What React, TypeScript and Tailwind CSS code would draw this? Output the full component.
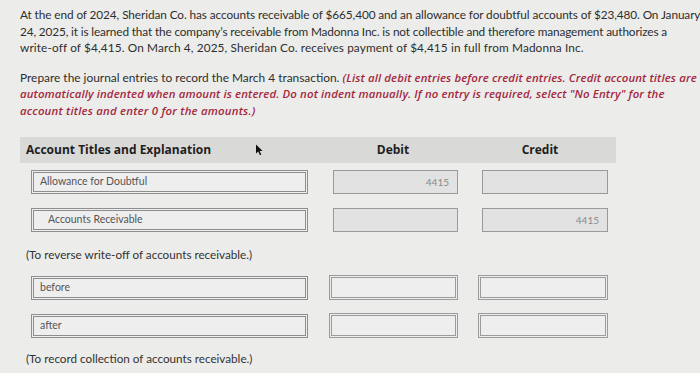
import React from "react";

interface RowProps {
    title: string;
    indent?: boolean;
    debit?: string;
    credit?: string;
    locked?: boolean;
}

const EntryRow: React.FC<RowProps> = ({ title, indent, debit, credit, locked }) => {
    const amountBox = locked
        ? "h-[24px] border border-[#9a9a9a] bg-[#e2e2e2] flex items-center justify-end pr-2 text-[10px] text-[#8a8a8a]"
        : "h-[25px] border-[3px] border-double border-[#9b9b9b] bg-[#eeeeee]";
    return (
        <div className="flex items-center h-[23px] ml-[20px]">
            <div className="ml-[11px] w-[277px] h-[24px] border-[3px] border-double border-[#8e8e8e] bg-[#eeeeee] flex items-center text-[10.5px] text-[#555]">
                <span className={indent ? "pl-[14px]" : "pl-[6px]"}>{title}</span>
            </div>
            <div className={`${amountBox} ${locked ? "ml-[25px] w-[125px]" : "ml-[21px] w-[129px]"}`}>
                {debit}
            </div>
            <div className={`${amountBox} ${locked ? "ml-[24px] w-[126px]" : "ml-[20px] w-[130px]"}`}>
                {credit}
            </div>
        </div>
    );
};

export default function App() {
    return (
        <div className="w-[700px] h-[373px] overflow-hidden bg-[#ececea] font-['Lato','Liberation_Sans',sans-serif] text-[#2e2e2e]">
            <div className="pl-[20px] pt-[7px] leading-[16.6px] whitespace-nowrap">
                <p className="text-[11.8px]">
                    <span className="tracking-[-0.09px]">
                        At the end of 2024, Sheridan Co. has accounts receivable of $665,400 and an allowance for doubtful accounts of $23,480. On January
                    </span>
                    <br />
                    <span className="tracking-[-0.14px]">
                        24, 2025, it is learned that the company’s receivable from Madonna Inc. is not collectible and therefore management authorizes a
                    </span>
                    <br />
                    <span className="tracking-[0.13px]">
                        write-off of $4,415. On March 4, 2025, Sheridan Co. receives payment of $4,415 in full from Madonna Inc.
                    </span>
                </p>
                <p className="mt-[13px] text-[11.9px]">
                    Prepare the journal entries to record the March 4 transaction.{" "}
                    <span className="italic font-semibold text-[#a3283f] font-['Open_Sans','Liberation_Sans',sans-serif] text-[11.4px]">
                        <span className="tracking-[0.12px]">(List all debit entries before credit entries. Credit account titles are</span>
                        <br />
                        <span className="tracking-[0.13px]">
                            automatically indented when amount is entered. Do not indent manually. If no entry is required, select "No Entry" for the
                        </span>
                        <br />
                        <span className="tracking-[0.2px]">account titles and enter 0 for the amounts.)</span>
                    </span>
                </p>
            </div>

            <div className="ml-[20px] mt-[17px] w-[596px] h-[26px] bg-[#d9d9d8] flex items-center text-[12px] font-bold text-[#1e1e1e] font-['Open_Sans','Liberation_Sans',sans-serif]">
                <div className="w-[300px] pl-[6px] flex items-center">
                    <span>Account Titles and Explanation</span>
                    <svg className="ml-[44px]" width="9" height="12" viewBox="0 0 9 12">
                        <path d="M1 0.5 L1 9.5 L3.2 7.6 L5 11.2 L6.3 10.6 L4.6 7.1 L7.6 7 Z" fill="#111" />
                    </svg>
                </div>
                <div className="w-[146px] text-center">Debit</div>
                <div className="w-[148px] text-center">Credit</div>
            </div>

            <div className="mt-[8px] flex flex-col gap-[15px]">
                <EntryRow title="Allowance for Doubtful" debit="4415" locked />
                <EntryRow title="Accounts Receivable" indent credit="4415" locked />
            </div>
            <p className="ml-[26px] mt-[14px] text-[11.7px] text-[#333]">(To reverse write-off of accounts receivable.)</p>

            <div className="mt-[13px] flex flex-col gap-[15px]">
                <EntryRow title="before" />
                <EntryRow title="after" />
            </div>
            <p className="ml-[26px] mt-[13px] text-[11.7px] text-[#333]">(To record collection of accounts receivable.)</p>
        </div>
    );
}
